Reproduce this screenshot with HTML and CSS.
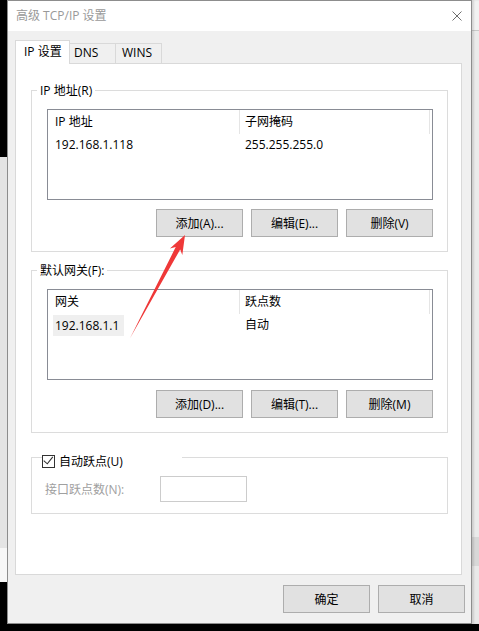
FILE: index.html
```html
<!DOCTYPE html>
<html>
<head>
    <title>高级 TCP/IP 设置</title>
    <link rel="stylesheet" href="styles.css">
</head>
<body>
    <div class="desk">
        <div class="edge edge-left"></div>

        <div class="dialog">
            <div class="titlebar">
                <span class="title">高级 TCP/IP 设置</span>
                <svg class="close" width="10" height="10" viewBox="0 0 10 10">
                    <path d="M0.5 0.5 L9.5 9.5 M9.5 0.5 L0.5 9.5" stroke="#6e6e6e" stroke-width="1" fill="none"/>
                </svg>
            </div>

            <div class="dialog-body">
                <div class="tabs">
                    <div class="tab active">IP 设置</div>
                    <div class="tab">DNS</div>
                    <div class="tab tab-wins">WINS</div>
                </div>

                <div class="panel">
                    <fieldset class="group">
                        <legend>IP 地址(R)</legend>
                        <div class="group-body">
                            <div class="listview">
                                <div class="lv-head">
                                    <div class="col c1">IP 地址</div>
                                    <div class="col c2">子网掩码</div>
                                </div>
                                <div class="lv-row">
                                    <div class="cell c1">192.168.1.118</div>
                                    <div class="cell c2">255.255.255.0</div>
                                </div>
                            </div>
                            <div class="btn-row">
                                <button class="btn">添加(A)...</button>
                                <button class="btn">编辑(E)...</button>
                                <button class="btn">删除(V)</button>
                            </div>
                        </div>
                    </fieldset>

                    <fieldset class="group">
                        <legend>默认网关(F):</legend>
                        <div class="group-body">
                            <div class="listview">
                                <div class="lv-head">
                                    <div class="col c1">网关</div>
                                    <div class="col c2">跃点数</div>
                                </div>
                                <div class="lv-row">
                                    <div class="cell c1"><span class="focus">192.168.1.1</span></div>
                                    <div class="cell c2">自动</div>
                                </div>
                            </div>
                            <div class="btn-row">
                                <button class="btn">添加(D)...</button>
                                <button class="btn">编辑(T)...</button>
                                <button class="btn">删除(M)</button>
                            </div>
                        </div>
                    </fieldset>

                    <fieldset class="group group-metric">
                        <legend class="check-legend">
                            <span class="checkbox">
                                <svg width="11" height="11" viewBox="0 0 11 11">
                                    <path d="M0.7 4.7 L4.3 7.8 L9.8 0.8" stroke="#333" stroke-width="1.1" fill="none"/>
                                </svg>
                            </span>
                            <span>自动跃点(U)</span>
                        </legend>
                        <div class="metric-row">
                            <span class="disabled-label">接口跃点数(N):</span>
                            <span class="textbox"></span>
                        </div>
                    </fieldset>
                </div>

                <div class="footer">
                    <button class="btn">确定</button>
                    <button class="btn">取消</button>
                </div>
            </div>
        </div>

        <div class="edge edge-right"></div>
    </div>

    <!-- annotation arrow pointing at the add button -->
    <svg class="arrow" width="479" height="631" viewBox="0 0 479 631">
        <polygon points="130,338.3 175.7,247.1 169.9,248.5 185,235 182.3,255.1 180.2,249.4" fill="#ef3838"/>
    </svg>
</body>
</html>
```

FILE: styles.css
```css
body {
    margin: 0;
    background: #000;
    font-family: "Open Sans", "Noto Sans CJK SC", sans-serif;
    font-size: 12px;
    color: #000;
}
.desk {
    display: flex;
    height: 631px;
}
.edge {
    width: 7px;
    height: 624px;
}
.edge-left {
    background: linear-gradient(#000 0 157px, #e4e4e4 157px 548px, #f7f7f7 548px 582px, #000 582px);
}
.edge-right {
    background: linear-gradient(#f2f2f2 0 30px, #c9c9c9 30px 31px, #ebebeb 31px 537px, #d8d8d8 537px 566px, #e9e9e9 566px);
    box-shadow: inset 2px 0 2px rgba(0, 0, 0, 0.12);
}
.dialog {
    width: 465px;
    height: 624px;
    box-sizing: border-box;
    border: 1px solid #8d8d8d;
    background: #f0f0f0;
    display: flex;
    flex-direction: column;
}
.titlebar {
    height: 30px;
    background: #fff;
    display: flex;
    align-items: center;
    justify-content: space-between;
    padding: 0 9px 0 8px;
}
.title {
    color: #999;
    line-height: 16px;
}
.dialog-body {
    padding: 9px 0 0 7px;
}

/* tabs */
.tabs {
    display: flex;
    align-items: flex-end;
    height: 23px;
    position: relative;
    z-index: 1;
}
.tab {
    box-sizing: border-box;
    width: 46px;
    height: 20px;
    line-height: 18px;
    padding-left: 4px;
    background: #f0f0f0;
    border-top: 1px solid #d9d9d9;
    border-right: 1px solid #d9d9d9;
}
.tab-wins {
    padding-left: 6px;
}
.tab.active {
    width: 55px;
    height: 24px;
    line-height: 22px;
    margin-bottom: -1px;
    padding-left: 8px;
    background: #fff;
    border-left: 1px solid #d9d9d9;
}
.panel {
    box-sizing: border-box;
    width: 447px;
    height: 512px;
    background: #fff;
    border: 1px solid #d9d9d9;
    padding: 18px 13px 0 15px;
}

/* group boxes */
.group {
    margin: 0;
    padding: 0;
    border: 1px solid #dcdcdc;
    min-width: 0;
}
.group + .group {
    margin-top: 10px;
}
.group legend {
    margin-left: 5px;
    padding: 0 3px;
    line-height: 17px;
}
.group-body {
    padding: 10px 14px 14px 15px;
}
.listview {
    box-sizing: border-box;
    height: 91px;
    border: 1px solid #898c95;
}
.lv-head,
.lv-row {
    display: flex;
}
.lv-head {
    height: 24px;
    line-height: 24px;
}
.lv-row {
    height: 22px;
    line-height: 22px;
}
.col,
.cell {
    box-sizing: border-box;
}
.c1 {
    width: 192px;
    padding-left: 7px;
}
.c2 {
    width: 190px;
    padding-left: 5px;
}
.col {
    border-right: 1px solid #e5e5e5;
}
.focus {
    display: inline-block;
    margin-left: -2px;
    padding: 0 5px 0 2px;
    margin-top: 1px;
    line-height: 21px;
    background: #efefef;
}
.btn-row {
    display: flex;
    justify-content: flex-end;
    gap: 8px;
    margin-top: 9px;
}
.group + .group .btn-row {
    margin-top: 10px;
}
.btn {
    box-sizing: border-box;
    width: 87px;
    height: 28px;
    margin: 0;
    padding: 0;
    background: #e1e1e1;
    border: 1px solid #adadad;
    font-family: inherit;
    font-size: 12px;
    color: #000;
}

/* hop count group */
.group.group-metric {
    margin-top: 12px;
}
.group .check-legend {
    box-sizing: border-box;
    width: 140px;
    margin-left: 10px;
    padding: 8px 0 0 0;
    display: flex;
    align-items: center;
    gap: 4px;
}
.checkbox {
    box-sizing: border-box;
    width: 13px;
    height: 13px;
    border: 1px solid #333;
    background: #fff;
    display: flex;
}
.metric-row {
    display: flex;
    align-items: center;
    padding: 6px 0 11px 13px;
}
.disabled-label {
    width: 115px;
    color: #a0a0a0;
}
.textbox {
    box-sizing: border-box;
    width: 87px;
    height: 26px;
    border: 1px solid #cccccc;
    background: #fff;
}

.footer {
    display: flex;
    justify-content: flex-end;
    gap: 8px;
    padding: 10px 6px 0 0;
}

.arrow {
    position: absolute;
    left: 0;
    top: 0;
    pointer-events: none;
}
```
